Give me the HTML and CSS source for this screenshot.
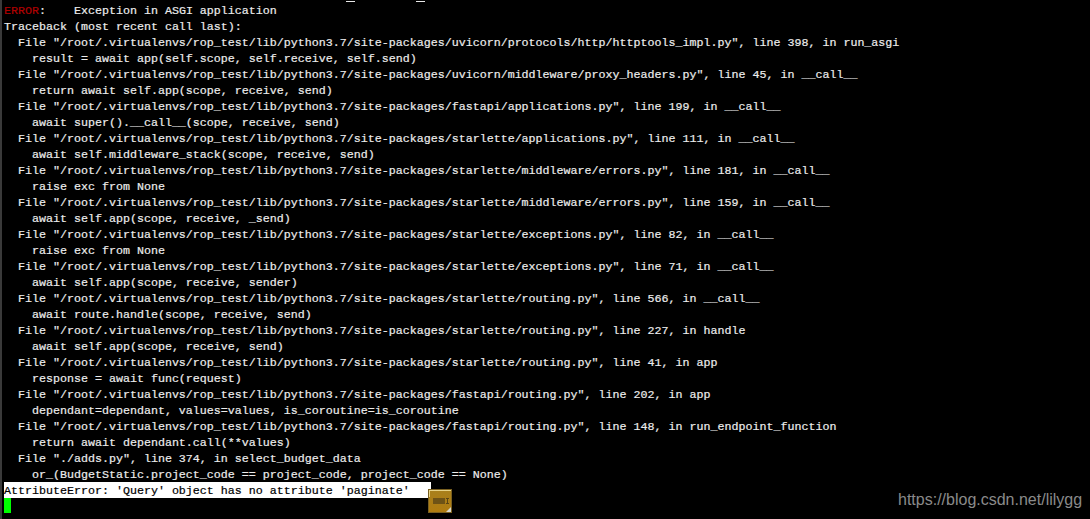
FILE: index.html
```
<!DOCTYPE html>
<html lang="en">
<head>
<meta charset="utf-8">
<title>Traceback</title>
<link rel="stylesheet" href="styles.css">
</head>
<body>
<main class="terminal">
<div class="top-marks"><span class="mark mark-a"></span><span class="mark mark-b"></span></div>
<div class="log first-line"><span class="err">ERROR</span><span>:    Exception in ASGI application</span></div>
<pre class="log">Traceback (most recent call last):
  File "/root/.virtualenvs/rop_test/lib/python3.7/site-packages/uvicorn/protocols/http/httptools_impl.py", line 398, in run_asgi
    result = await app(self.scope, self.receive, self.send)
  File "/root/.virtualenvs/rop_test/lib/python3.7/site-packages/uvicorn/middleware/proxy_headers.py", line 45, in __call__
    return await self.app(scope, receive, send)
  File "/root/.virtualenvs/rop_test/lib/python3.7/site-packages/fastapi/applications.py", line 199, in __call__
    await super().__call__(scope, receive, send)
  File "/root/.virtualenvs/rop_test/lib/python3.7/site-packages/starlette/applications.py", line 111, in __call__
    await self.middleware_stack(scope, receive, send)
  File "/root/.virtualenvs/rop_test/lib/python3.7/site-packages/starlette/middleware/errors.py", line 181, in __call__
    raise exc from None
  File "/root/.virtualenvs/rop_test/lib/python3.7/site-packages/starlette/middleware/errors.py", line 159, in __call__
    await self.app(scope, receive, _send)
  File "/root/.virtualenvs/rop_test/lib/python3.7/site-packages/starlette/exceptions.py", line 82, in __call__
    raise exc from None
  File "/root/.virtualenvs/rop_test/lib/python3.7/site-packages/starlette/exceptions.py", line 71, in __call__
    await self.app(scope, receive, sender)
  File "/root/.virtualenvs/rop_test/lib/python3.7/site-packages/starlette/routing.py", line 566, in __call__
    await route.handle(scope, receive, send)
  File "/root/.virtualenvs/rop_test/lib/python3.7/site-packages/starlette/routing.py", line 227, in handle
    await self.app(scope, receive, send)
  File "/root/.virtualenvs/rop_test/lib/python3.7/site-packages/starlette/routing.py", line 41, in app
    response = await func(request)
  File "/root/.virtualenvs/rop_test/lib/python3.7/site-packages/fastapi/routing.py", line 202, in app
    dependant=dependant, values=values, is_coroutine=is_coroutine
  File "/root/.virtualenvs/rop_test/lib/python3.7/site-packages/fastapi/routing.py", line 148, in run_endpoint_function
    return await dependant.call(**values)
  File "./adds.py", line 374, in select_budget_data
    or_(BudgetStatic.project_code == project_code, project_code == None)</pre>
<div class="log selected">AttributeError: 'Query' object has no attribute 'paginate'</div>
<div class="cursor"></div>
<div class="ime-icon">
<svg viewBox="0 0 24 24" width="24" height="24" aria-hidden="true">
<defs><linearGradient id="g" x1="0" y1="0" x2="0" y2="1"><stop offset="0" stop-color="#a8801c"/><stop offset="1" stop-color="#b07c10"/></linearGradient></defs>
<rect x="0.5" y="0.5" width="23" height="23" fill="url(#g)" stroke="#7a6020"/>
<path d="M1 1.500h22M1.500 1v7" stroke="#e8d488" fill="none"/>
<rect x="5" y="9" width="12" height="6" fill="#6e5316"/>
<path d="M18 9.500h3M19.500 9.500v5M18 14.500h3" stroke="#5a4514" fill="none"/>
<path d="M23 18v5h-5z" fill="#d8d8d0"/>
</svg>
</div>
<div class="watermark">https://blog.csdn.net/lilygg</div>
</main>
</body>
</html>
```
FILE: styles.css
```
html, body {
  margin: 0;
  padding: 0;
  background: #000;
}

.terminal {
  position: relative;
  width: 1090px;
  height: 519px;
  overflow: hidden;
  background: #000;
  box-sizing: border-box;
  border-left: 2px solid #3a3a3a;
  padding: 3px 0 0 2px;
}

.log {
  margin: 0;
  font-family: "Liberation Mono", "Courier New", monospace;
  font-size: 11.67px;
  line-height: 16px;
  color: #ececec;
  -webkit-text-stroke: 0.2px currentColor;
  white-space: pre;
}

.err {
  color: #b00000;
}

.selected {
  width: 427px;
  height: 15px;
  background: #fff;
  box-shadow: 0 -1px 0 #fff;
  color: #000;
}

.cursor {
  width: 7px;
  height: 15px;
  background: #00ff00;
}

.top-marks {
  position: absolute;
  top: 0;
  left: -2px;
  width: 100%;
}

.mark {
  position: absolute;
  top: 1px;
  width: 9px;
  height: 1px;
  background: #e8e8e8;
}

.mark-a { left: 346px; }
.mark-b { left: 416px; }

.ime-icon {
  position: absolute;
  left: 426px;
  top: 489px;
  width: 24px;
  height: 24px;
}

.ime-icon svg {
  display: block;
}

.watermark {
  position: absolute;
  left: 896px;
  top: 490px;
  font-family: "Liberation Sans", Arial, sans-serif;
  font-size: 16px;
  line-height: 20px;
  color: #8a8a8a;
}
```
